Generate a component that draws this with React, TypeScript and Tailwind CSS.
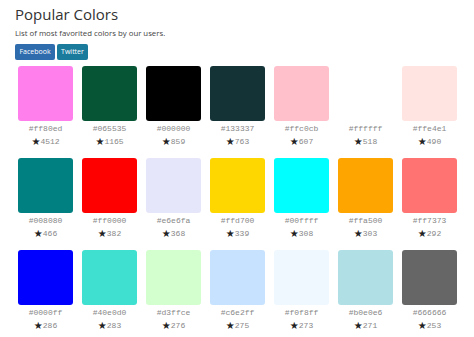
const colors: { hex: string; likes: number }[] = [
  { hex: "#ff80ed", likes: 4512 },
  { hex: "#065535", likes: 1165 },
  { hex: "#000000", likes: 859 },
  { hex: "#133337", likes: 763 },
  { hex: "#ffc0cb", likes: 607 },
  { hex: "#ffffff", likes: 518 },
  { hex: "#ffe4e1", likes: 490 },
  { hex: "#008080", likes: 466 },
  { hex: "#ff0000", likes: 382 },
  { hex: "#e6e6fa", likes: 368 },
  { hex: "#ffd700", likes: 339 },
  { hex: "#00ffff", likes: 308 },
  { hex: "#ffa500", likes: 303 },
  { hex: "#ff7373", likes: 292 },
  { hex: "#0000ff", likes: 286 },
  { hex: "#40e0d0", likes: 283 },
  { hex: "#d3ffce", likes: 276 },
  { hex: "#c6e2ff", likes: 275 },
  { hex: "#f0f8ff", likes: 273 },
  { hex: "#b0e0e6", likes: 271 },
  { hex: "#666666", likes: 253 },
];

export default function App() {
  return (
    <div className="w-[474px] h-[337px] bg-white overflow-hidden pl-[15px] pt-[5px] font-['Open_Sans',sans-serif]">
      <h1 className="text-[15px] leading-[19px] text-[#333]">Popular Colors</h1>
      <p className="mt-[4px] text-[7.8px] leading-[10px] text-[#444]">
        List of most favorited colors by our users.
      </p>
      <div className="mt-[6px] flex gap-[2px]">
        <button className="h-[16px] w-[40px] rounded-[2px] bg-[#2f6cae] text-[7px] text-white">
          Facebook
        </button>
        <button className="h-[16px] w-[31px] rounded-[2px] bg-[#1a7b9d] text-[7px] text-white">
          Twitter
        </button>
      </div>
      <div className="mt-[6px] ml-[3px] grid grid-cols-[repeat(7,55px)] gap-x-[9px] gap-y-[10px]">
        {colors.map((c) => (
          <div key={c.hex} className="flex flex-col items-center">
            <div className="h-[55px] w-[55px] rounded-[3px]" style={{ backgroundColor: c.hex }} />
            <div className="mt-[3px] text-[8px] leading-[10px] text-[#888] font-['Liberation_Mono',monospace]">
              {c.hex}
            </div>
            <div className="mt-[2px] flex items-center leading-[12px]">
              <span className="text-[10px] text-[#222] font-['DejaVu_Sans',sans-serif]">★</span>
              <span className="text-[8px] text-[#888] font-['Liberation_Mono',monospace]">{c.likes}</span>
            </div>
          </div>
        ))}
      </div>
    </div>
  );
}
